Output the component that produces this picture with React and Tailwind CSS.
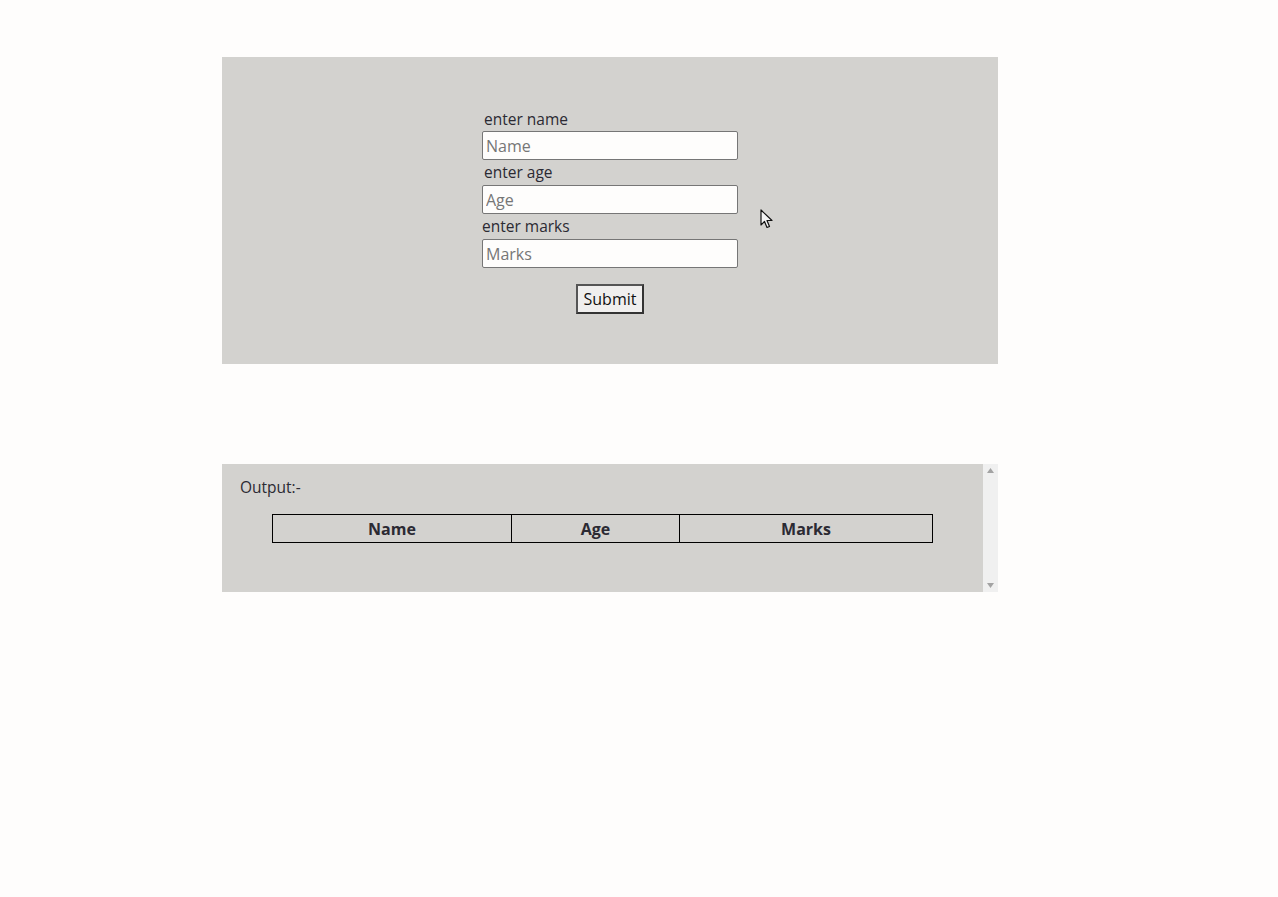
const fieldCls =
  'w-[256px] h-[29px] px-[3px] border border-[#767676] rounded-[2px] bg-[#fefdfc] text-[16px] text-[#222] placeholder:text-[#767676] outline-none';

const Cursor = () => (
  <svg
    className="absolute left-[760px] top-[209px]"
    width="14"
    height="21"
    viewBox="0 0 14 21"
  >
    <path
      d="M1 1 L1 16 L4.5 12.5 L7 18.5 L9.5 17.5 L7 11.5 L12 11.5 Z"
      fill="#f4f4f4"
      stroke="#111"
      strokeWidth="1.2"
      strokeLinejoin="round"
    />
  </svg>
);

const App = () => {
  return (
    <div
      className="relative min-h-[897px] bg-[#fefdfc] text-[#2b2a33] pt-[57px]"
      style={{ fontFamily: '"Open Sans", "Noto Sans", sans-serif' }}
    >
      {/* Formulario */}
      <div className="w-[776px] ml-[222px] bg-[#d3d2cf] pt-[50px] pb-[50px] flex flex-col items-center">
        <form className="w-[256px] flex flex-col text-[15.5px]">
          <label className="pl-[2px] h-[24px] leading-[24px]">enter name</label>
          <input className={fieldCls} placeholder="Name" />
          <label className="pl-[2px] h-[25px] leading-[25px]">enter age</label>
          <input className={fieldCls} placeholder="Age" />
          <label className="h-[25px] leading-[25px]">enter marks</label>
          <input className={fieldCls} placeholder="Marks" />
          <div className="flex justify-center mt-[16px]">
            <button
              type="button"
              className="w-[68px] h-[30px] text-[16px] text-[#111] bg-[#f0efee] border-2 border-t-[#555] border-l-[#555] border-r-[#333] border-b-[#333]"
            >
              Submit
            </button>
          </div>
        </form>
      </div>

      {/* Salida */}
      <div className="ml-[222px] mt-[100px] w-[776px] h-[128px] flex bg-[#d3d2cf]">
        <div className="flex-1 pt-[13px]">
          <p className="pl-[18px] text-[15.5px] leading-[20px]">Output:-</p>
          <table className="mt-[17px] mx-auto w-[661px] border-collapse border border-black text-[16px]">
            <thead>
              <tr className="h-[28px]">
                <th className="w-[239px] border border-black font-bold">Name</th>
                <th className="w-[168px] border border-black font-bold">Age</th>
                <th className="border border-black font-bold">Marks</th>
              </tr>
            </thead>
            <tbody></tbody>
          </table>
        </div>
        <div className="w-[15px] bg-[#f0f0f0] flex flex-col justify-between items-center py-[4px]">
          <svg width="7" height="5" viewBox="0 0 7 5">
            <path d="M0 5 L3.5 0 L7 5 Z" fill="#a3a3a3" />
          </svg>
          <svg width="7" height="5" viewBox="0 0 7 5">
            <path d="M0 0 L3.5 5 L7 0 Z" fill="#a3a3a3" />
          </svg>
        </div>
      </div>

      <Cursor />
    </div>
  );
};

export default App;
